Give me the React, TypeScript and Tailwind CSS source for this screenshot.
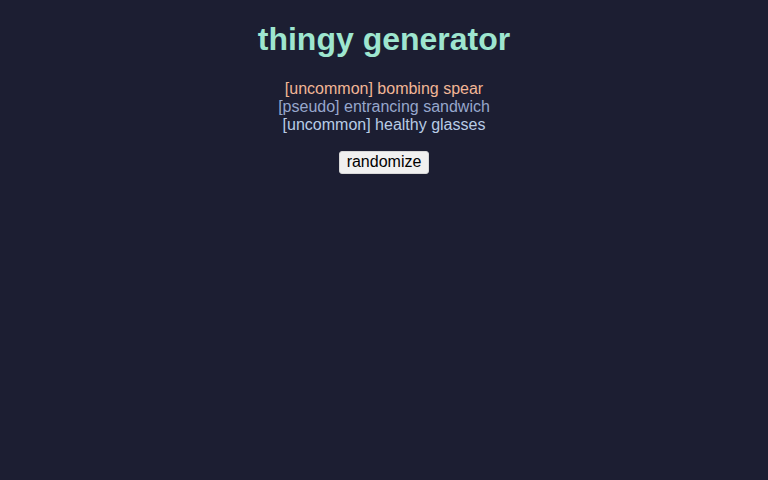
const items = [
  { rarity: "uncommon", name: "bombing spear", color: "text-[#f2b696]" },
  { rarity: "pseudo", name: "entrancing sandwich", color: "text-[#97a7cc]" },
  { rarity: "uncommon", name: "healthy glasses", color: "text-[#b8cce6]" },
]

export default function App() {
  return (
    <main className="min-h-screen w-full bg-[#1c1e32] text-center font-['Liberation_Sans',Arial,sans-serif] text-base">
      <h1 className="pt-[21px] pb-[22px] text-[32px] leading-[37px] font-bold text-[#9ee6cf]">
        thingy generator
      </h1>
      <div className="flex flex-col items-center leading-[18px]">
        {items.map((item, i) => (
          <div key={i} className={item.color}>
            [{item.rarity}] {item.name}
          </div>
        ))}
      </div>
      <div className="mt-[16px]">
        <button className="h-[23px] rounded-[3px] border border-[#d8d8d8] bg-[#f0f0f0] px-[7px] text-base leading-[18px] text-black">
          randomize
        </button>
      </div>
    </main>
  )
}
